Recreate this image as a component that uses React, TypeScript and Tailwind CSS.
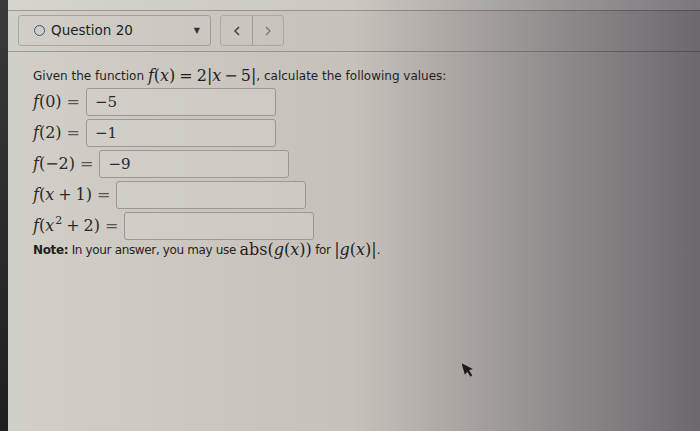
import React from "react";

const SERIF = '"DejaVu Serif", "Liberation Serif", serif';

const M = ({ children, i }: { children: React.ReactNode; i?: boolean }) => (
  <span className={i ? "italic" : ""} style={{ fontFamily: SERIF }}>
    {children}
  </span>
);

const Op = ({ c, s = 4 }: { c: string; s?: number }) => (
  <span style={{ fontFamily: SERIF, margin: `0 ${s}px` }}>{c}</span>
);

function Row({ label, value }: { label: React.ReactNode; value?: string }) {
  return (
    <div className="flex items-center h-[28px]">
      <div className="flex items-center text-[16px] text-[#2a2a2a]">
        {label}
        <span className="ml-[5px] mr-[6px] text-[#555]" style={{ fontFamily: SERIF }}>=</span>
      </div>
      <div className="h-[28px] w-[190px] border border-[#9c9890] rounded-[3px] bg-[#d6d3cc]/40 flex items-center pl-[8px] text-[15px] text-[#2a2a2a]" style={{ fontFamily: SERIF }}>
        {value}
      </div>
    </div>
  );
}

export default function App() {
  return (
    <div className="relative w-[700px] h-[431px] overflow-hidden flex bg-[#2a2a2e]" style={{ fontFamily: '"DejaVu Sans", Verdana, sans-serif' }}>
      <div className="w-[8px] bg-gradient-to-b from-[#3a3a3e] to-[#1f1f23]" />
      <div className="flex-1 flex flex-col bg-gradient-to-r from-[#d2cfc8] via-[#c6c1ba] to-[#6c696e]">
        <div className="h-[10px] bg-white/10" />
        <div className="border-t border-black/25" />
        <div className="flex items-center pl-[10px] mt-[4px]">
          <div className="w-[193px] h-[31px] border border-black/20 rounded-[3px] flex items-center pl-[15px] pr-[10px]">
            <span className="w-[11px] h-[11px] rounded-full border-[1.5px] border-[#4b4a86]" />
            <span className="ml-[6px] text-[13.5px] text-[#1f1f1f]">Question 20</span>
            <span className="ml-auto text-[8px] text-[#333]">▼</span>
          </div>
          <div className="ml-[9px] w-[64px] h-[31px] border border-black/15 rounded-[3px] flex">
            <div className="w-[32px] border-r border-black/20 flex items-center justify-center">
              <svg width="8" height="10" viewBox="0 0 8 10"><path d="M6 1 L2 5 L6 9" fill="none" stroke="#444" strokeWidth="1.5" /></svg>
            </div>
            <div className="flex-1 flex items-center justify-center">
              <svg width="8" height="10" viewBox="0 0 8 10"><path d="M2 1 L6 5 L2 9" fill="none" stroke="#777" strokeWidth="1.3" /></svg>
            </div>
          </div>
        </div>
        <div className="mt-[5px] border-t border-black/25" />
        <div className="pl-[25px] pt-[14px] text-[#1f1f1f]">
          <div className="text-[12px] h-[20px] flex items-center">
            <span>Given the function&nbsp;</span>
            <span className="text-[16px] flex items-center">
              <M i>f</M><M>(</M><M i>x</M><M>)</M><Op c="=" /><M>2|</M><M i>x</M><Op c="−" s={3} /><M>5|</M>
            </span>
            <span>, calculate the following values:</span>
          </div>
          <div className="flex flex-col gap-[3px] mt-[2px]">
            <Row label={<><M i>f</M><M>(0)</M></>} value="−5" />
            <Row label={<><M i>f</M><M>(2)</M></>} value="−1" />
            <Row label={<><M i>f</M><M>(−2)</M></>} value="−9" />
            <Row label={<><M i>f</M><M>(</M><M i>x</M><Op c="+" s={4} /><M>1)</M></>} />
            <Row label={<><M i>f</M><M>(</M><M i>x</M><sup className="text-[11px] ml-[1px]" style={{ fontFamily: SERIF }}>2</sup><Op c="+" s={4} /><M>2)</M></>} />
          </div>
          <div className="text-[12px] tracking-[-0.35px] mt-[1px] flex items-center h-[18px]">
            <span className="font-bold">Note:</span>
            <span>&nbsp;In your answer, you may use&nbsp;</span>
            <span className="text-[16px] tracking-normal"><M>abs(</M><M i>g</M><M>(</M><M i>x</M><M>))</M></span>
            <span>&nbsp;for&nbsp;</span>
            <span className="text-[16px] tracking-normal"><M>|</M><M i>g</M><M>(</M><M i>x</M><M>)|</M></span>
            <span>.</span>
          </div>
        </div>
      </div>
      <svg className="absolute left-[462px] top-[361px]" width="14" height="18" viewBox="0 0 14 18">
        <path d="M1 1 L11 9 L7 9.5 L9 15 L7 16 L5 10.5 L2 13 Z" fill="#1a1a1a" transform="rotate(-12 6 9)" />
      </svg>
    </div>
  );
}
